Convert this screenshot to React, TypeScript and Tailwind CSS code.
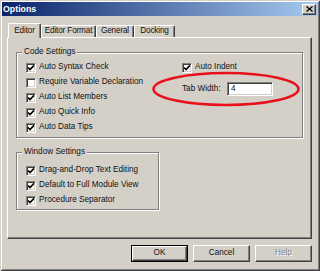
import React from 'react'

const font = "font-['Liberation_Sans',Arial,sans-serif]"

const CheckBox: React.FC<{ checked?: boolean }> = ({ checked }) => (
    <span className="w-[10px] h-[10px] shrink-0 bg-white border border-t-[#808080] border-l-[#808080] border-b-white border-r-white shadow-[inset_1px_1px_0_#404040,inset_-1px_-1px_0_#d4d0c8] flex items-center justify-center">
        {checked && (
            <svg width="8" height="8" viewBox="0 0 8 8">
                <path d="M1 3.5 L3 5.6 L7 1.4" stroke="#000" strokeWidth="1.6" fill="none" />
            </svg>
        )}
    </span>
)

const Row: React.FC<{ label: string; checked?: boolean }> = ({ label, checked }) => (
    <div className="flex items-center gap-[3px] h-[15px]">
        <CheckBox checked={checked} />
        <span>{label}</span>
    </div>
)

const Group: React.FC<{ title: string; className: string; children: React.ReactNode }> = ({ title, className, children }) => (
    <div className={'relative border border-[#808080] shadow-[1px_1px_0_#fff,inset_1px_1px_0_#fff] ' + className}>
        <span className="absolute -top-[6px] left-[5px] px-[2px] bg-[#d4d0c8] leading-[10px]">{title}</span>
        {children}
    </div>
)

const Tab: React.FC<{ label: string; width: string; active?: boolean }> = ({ label, width, active }) => (
    <div
        className={
            'flex items-center justify-center bg-[#d4d0c8] tracking-[-0.15px] border-t border-l border-r border-t-white border-l-white border-r-[#404040] rounded-t-[2px] shadow-[inset_-1px_0_0_#808080] ' +
            width +
            (active ? ' h-[15px] -mb-px relative z-10' : ' h-[12px]')
        }
    >
        {label}
    </div>
)

const Button: React.FC<{ label: string; isDefault?: boolean; disabled?: boolean }> = ({ label, isDefault, disabled }) => (
    <div className={'w-[57px] h-[17px] ' + (isDefault ? 'border border-black' : '')}>
        <div
            className={
                'w-full h-full flex items-center justify-center border border-t-white border-l-white border-b-[#404040] border-r-[#404040] shadow-[inset_-1px_-1px_0_#808080] ' +
                (disabled ? 'text-[#808080] [text-shadow:1px_1px_0_#fff]' : 'text-[#111]')
            }
        >
            {label}
        </div>
    </div>
)

export default function App() {
    return (
        <div
            className={
                'relative w-[320px] h-[271px] bg-[#d4d0c8] p-[2px] flex flex-col text-[8.2px] text-[#111] leading-none shadow-[inset_1px_1px_0_#d4d0c8,inset_-1px_-1px_0_#404040,inset_2px_2px_0_#fff,inset_-2px_-2px_0_#808080] ' +
                font
            }
        >
            {/* title bar */}
            <div className="h-[14px] flex items-center justify-between pl-[1px] pr-[2px] bg-[linear-gradient(to_right,#0a246a,#a6caf0)]">
                <span className="text-white font-bold text-[8.8px]">Options</span>
                <div className="w-[14px] h-[11px] bg-[#d4d0c8] border border-t-white border-l-white border-b-[#404040] border-r-[#404040] shadow-[inset_-1px_-1px_0_#808080] flex items-center justify-center">
                    <svg width="7" height="6" viewBox="0 0 7 6">
                        <path d="M0.5 0.5 L6.5 5.5 M6.5 0.5 L0.5 5.5" stroke="#000" strokeWidth="1.3" />
                    </svg>
                </div>
            </div>

            {/* tabs */}
            <div className="mt-[7px] ml-[6px] h-[14px] flex items-end">
                <Tab label="Editor" width="w-[33px]" active />
                <Tab label="Editor Format" width="w-[55px]" />
                <Tab label="General" width="w-[38px]" />
                <Tab label="Docking" width="w-[41px]" />
            </div>

            {/* panel */}
            <div className="ml-[5px] w-[305px] h-[202px] border border-t-white border-l-white border-b-[#404040] border-r-[#404040] shadow-[inset_-1px_-1px_0_#808080] pt-[14px] pl-[8px]">
                <Group title="Code Settings" className="w-[287px] h-[86px] pt-[7px] pl-[9px] flex">
                    <div className="w-[156px] flex flex-col">
                        <Row label="Auto Syntax Check" checked />
                        <Row label="Require Variable Declaration" />
                        <Row label="Auto List Members" checked />
                        <Row label="Auto Quick Info" checked />
                        <Row label="Auto Data Tips" checked />
                    </div>
                    <div className="flex flex-col">
                        <Row label="Auto Indent" checked />
                        <div className="mt-[7px] flex items-center">
                            <span className="w-[45px]">Tab Width:</span>
                            <div className="w-[46px] h-[14px] bg-white border border-t-[#808080] border-l-[#808080] border-b-white border-r-white shadow-[inset_1px_1px_0_#404040,inset_-1px_-1px_0_#d4d0c8] flex items-center pl-[3px]">
                                4
                            </div>
                        </div>
                    </div>
                </Group>

                <Group title="Window Settings" className="mt-[14px] w-[143px] h-[58px] pt-[10px] pl-[9px] flex flex-col">
                    <Row label="Drag-and-Drop Text Editing" checked />
                    <Row label="Default to Full Module View" checked />
                    <Row label="Procedure Separator" checked />
                </Group>
            </div>

            {/* buttons */}
            <div className="mt-[6px] mr-[6px] flex justify-end gap-[5px]">
                <Button label="OK" isDefault />
                <Button label="Cancel" />
                <Button label="Help" disabled />
            </div>

            {/* red annotation */}
            <svg className="absolute left-[151px] top-[71px]" width="150" height="36" viewBox="0 0 150 36">
                <ellipse cx="75" cy="18" rx="72.5" ry="16" stroke="#e8101a" strokeWidth="2.6" fill="none" />
            </svg>
        </div>
    )
}
